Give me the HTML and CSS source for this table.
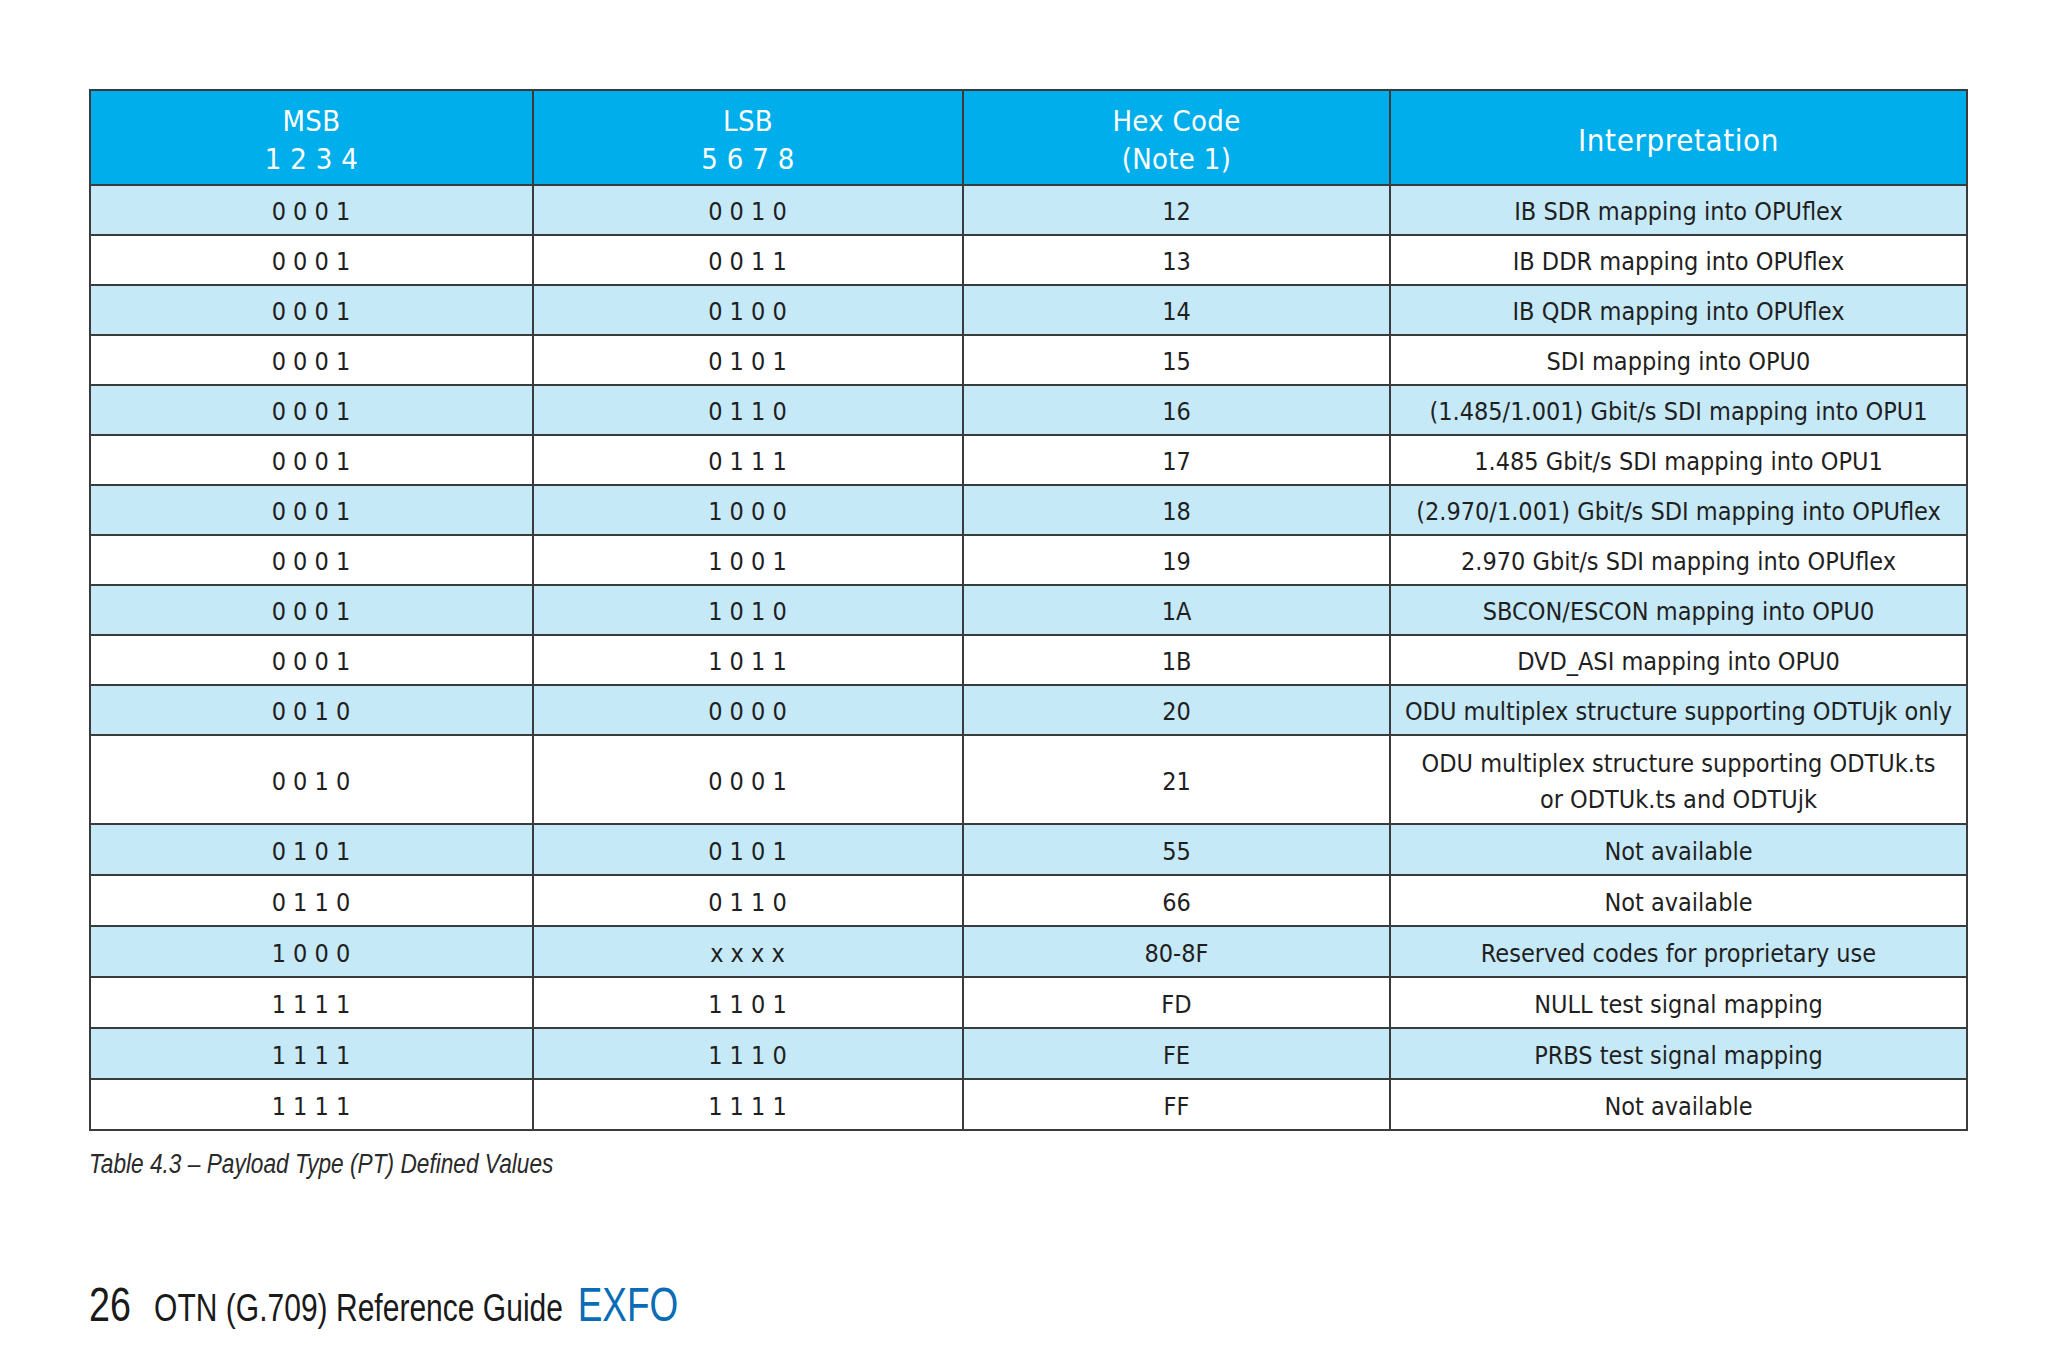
FILE: index.html
```html
<!DOCTYPE html>
<html>
<head>
<meta charset="utf-8">
<link rel="stylesheet" href="styles.css">
</head>
<body>
<div class="page">
  <table class="pt">
    <colgroup>
      <col class="c1"><col class="c2"><col class="c3"><col class="c4">
    </colgroup>
    <thead>
      <tr><th>MSB<br>1 2 3 4</th><th>LSB<br>5 6 7 8</th><th>Hex Code<br>(Note 1)</th><th class="interp">Interpretation</th></tr>
    </thead>
    <tbody>
      <tr class="alt"><td class="bin">0 0 0 1</td><td class="bin">0 0 1 0</td><td>12</td><td>IB SDR mapping into OPUflex</td></tr>
      <tr><td class="bin">0 0 0 1</td><td class="bin">0 0 1 1</td><td>13</td><td>IB DDR mapping into OPUflex</td></tr>
      <tr class="alt"><td class="bin">0 0 0 1</td><td class="bin">0 1 0 0</td><td>14</td><td>IB QDR mapping into OPUflex</td></tr>
      <tr><td class="bin">0 0 0 1</td><td class="bin">0 1 0 1</td><td>15</td><td>SDI mapping into OPU0</td></tr>
      <tr class="alt"><td class="bin">0 0 0 1</td><td class="bin">0 1 1 0</td><td>16</td><td>(1.485/1.001) Gbit/s SDI mapping into OPU1</td></tr>
      <tr><td class="bin">0 0 0 1</td><td class="bin">0 1 1 1</td><td>17</td><td>1.485 Gbit/s SDI mapping into OPU1</td></tr>
      <tr class="alt"><td class="bin">0 0 0 1</td><td class="bin">1 0 0 0</td><td>18</td><td>(2.970/1.001) Gbit/s SDI mapping into OPUflex</td></tr>
      <tr><td class="bin">0 0 0 1</td><td class="bin">1 0 0 1</td><td>19</td><td>2.970 Gbit/s SDI mapping into OPUflex</td></tr>
      <tr class="alt"><td class="bin">0 0 0 1</td><td class="bin">1 0 1 0</td><td>1A</td><td>SBCON/ESCON mapping into OPU0</td></tr>
      <tr><td class="bin">0 0 0 1</td><td class="bin">1 0 1 1</td><td>1B</td><td>DVD_ASI mapping into OPU0</td></tr>
      <tr class="alt"><td class="bin">0 0 1 0</td><td class="bin">0 0 0 0</td><td>20</td><td>ODU multiplex structure supporting ODTUjk only</td></tr>
      <tr class="tall"><td class="bin">0 0 1 0</td><td class="bin">0 0 0 1</td><td>21</td><td>ODU multiplex structure supporting ODTUk.ts<br>or ODTUk.ts and ODTUjk</td></tr>
      <tr class="alt lo"><td class="bin">0 1 0 1</td><td class="bin">0 1 0 1</td><td>55</td><td>Not available</td></tr>
      <tr class="lo"><td class="bin">0 1 1 0</td><td class="bin">0 1 1 0</td><td>66</td><td>Not available</td></tr>
      <tr class="alt lo"><td class="bin">1 0 0 0</td><td class="bin">x x x x</td><td>80-8F</td><td>Reserved codes for proprietary use</td></tr>
      <tr class="lo"><td class="bin">1 1 1 1</td><td class="bin">1 1 0 1</td><td>FD</td><td>NULL test signal mapping</td></tr>
      <tr class="alt lo"><td class="bin">1 1 1 1</td><td class="bin">1 1 1 0</td><td>FE</td><td>PRBS test signal mapping</td></tr>
      <tr class="lo"><td class="bin">1 1 1 1</td><td class="bin">1 1 1 1</td><td>FF</td><td>Not available</td></tr>
    </tbody>
  </table>
  <p class="caption">Table 4.3 – Payload Type (PT) Defined Values</p>
  <div class="footer">
    <span class="pnum">26</span>
    <span class="title">OTN (G.709) Reference Guide</span>
    <span class="brand">EXFO</span>
  </div>
</div>
</body>
</html>
```

FILE: styles.css
```css
html, body {
  margin: 0;
  padding: 0;
  background: #ffffff;
}

.page {
  padding: 89px 0 0 89px;
  width: 1880px;
}

.pt {
  border-collapse: collapse;
  width: 1877px;
  table-layout: fixed;
  font-family: "DejaVu Sans Condensed", "DejaVu Sans", sans-serif;
  font-weight: normal;
  color: #1f1f1f;
}

.c1 { width: 443px; }
.c2 { width: 430px; }
.c3 { width: 427px; }
.c4 { width: 577px; }

.pt th, .pt td {
  border: 2px solid #3a3b3d;
  text-align: center;
  vertical-align: middle;
  padding: 0;
}

.pt th {
  background: #00aeeb;
  color: #ffffff;
  height: 89px;
  padding-top: 4px;
  font-size: 29px;
  font-weight: normal;
  line-height: 38px;
  letter-spacing: 0.3px;
}

.pt th.interp {
  font-size: 31px;
  letter-spacing: 0.6px;
}

.pt td {
  height: 44px;
  padding-top: 4px;
  font-size: 25px;
  line-height: 36px;
}

.pt tr.lo td {
  height: 45px;
}

.pt tr.tall td {
  height: 83px;
}

.pt tr.alt td {
  background: #c6e9f8;
}

.pt td.bin {
  letter-spacing: 1px;
  word-spacing: -2px;
}

.caption {
  margin: 18px 0 0 0;
  font-family: "Liberation Sans Narrow", "Liberation Sans", sans-serif;
  font-style: italic;
  font-size: 27px;
  color: #2a2a2a;
  transform: scaleX(0.84);
  transform-origin: left center;
}

.footer {
  margin-top: 96px;
  display: flex;
  align-items: baseline;
  font-family: "Liberation Sans Narrow", "Liberation Sans", sans-serif;
  color: #1a1a1a;
  transform: scaleX(0.77);
  transform-origin: left center;
}

.pnum {
  font-size: 49px;
  margin-right: 30px;
}

.title {
  font-size: 39px;
  margin-right: 19px;
}

.brand {
  font-size: 48px;
  color: #0a6cb6;
}
```
